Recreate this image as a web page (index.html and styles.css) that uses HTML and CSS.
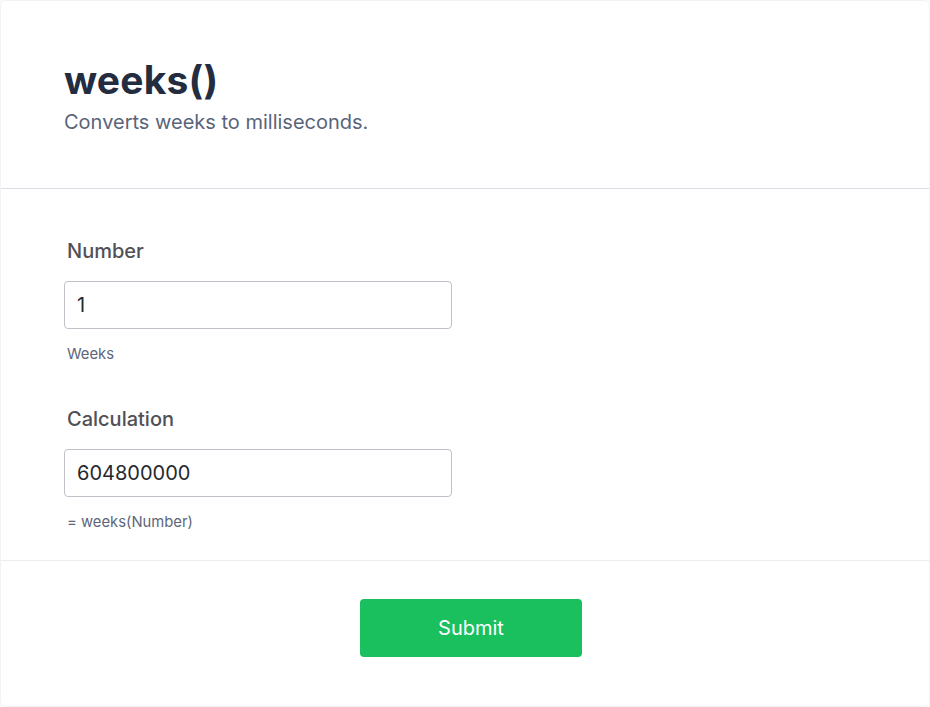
FILE: index.html
```html
<!DOCTYPE html>
<html lang="en">
<head>
<meta charset="utf-8">
<title>weeks()</title>
<link rel="stylesheet" href="styles.css">
</head>
<body>
<main class="card">
  <header class="head">
    <h1 class="title">weeks()</h1>
    <p class="subtitle">Converts weeks to milliseconds.</p>
  </header>
  <section class="fields">
    <div class="field">
      <label class="label" for="num">Number</label>
      <input class="input" id="num" type="text" value="1">
      <div class="help">Weeks</div>
    </div>
    <div class="field">
      <label class="label" for="calc">Calculation</label>
      <input class="input" id="calc" type="text" value="604800000">
      <div class="help">= weeks(Number)</div>
    </div>
  </section>
  <footer class="foot">
    <button class="submit" type="button">Submit</button>
  </footer>
</main>
</body>
</html>
```
FILE: styles.css
```css
* { box-sizing: border-box; }
html, body { margin: 0; padding: 0; background: #fafafb; }
body { font-family: Inter, "Noto Sans", sans-serif; }
.card {
  width: 930px;
  min-height: 707px;
  background: #fff;
  border: 1px solid #f3f3f6;
  border-radius: 6px;
  overflow: hidden;
}
.head {
  padding: 56px 63px 52px 63px;
  border-bottom: 1px solid #dcdce5;
}
.title {
  margin: 0;
  font-size: 39px;
  line-height: 46px;
  font-weight: 700;
  color: #242c3f;
  letter-spacing: 0.2px;
}
.subtitle {
  margin: 5px 0 0;
  font-size: 20px;
  line-height: 28px;
  color: #59647a;
}
.fields {
  padding: 50px 63px 28px;
  border-bottom: 1px solid #ececf1;
  display: flex;
  flex-direction: column;
  gap: 43px;
}
.field { display: flex; flex-direction: column; }
.label {
  font-size: 20px;
  line-height: 24px;
  font-weight: 500;
  color: #505056;
  padding-left: 3px;
}
.input {
  margin-top: 18px;
  width: 388px;
  height: 48px;
  border: 1px solid #bfc0c8;
  border-radius: 4px;
  padding: 0 12px;
  font-family: inherit;
  font-size: 20px;
  color: #26282e;
  background: #fff;
  outline: none;
}
.help {
  margin-top: 15px;
  font-size: 14.8px;
  line-height: 20px;
  color: #5d6679;
  padding-left: 3px;
}
.foot {
  display: flex;
  justify-content: center;
  padding: 38px 0 48px 12px;
}
.submit {
  width: 222px;
  height: 58px;
  border: none;
  border-radius: 4px;
  background: #1abf5e;
  color: #fff;
  font-family: inherit;
  font-size: 20px;
  font-weight: 400;
  cursor: pointer;
}
```
